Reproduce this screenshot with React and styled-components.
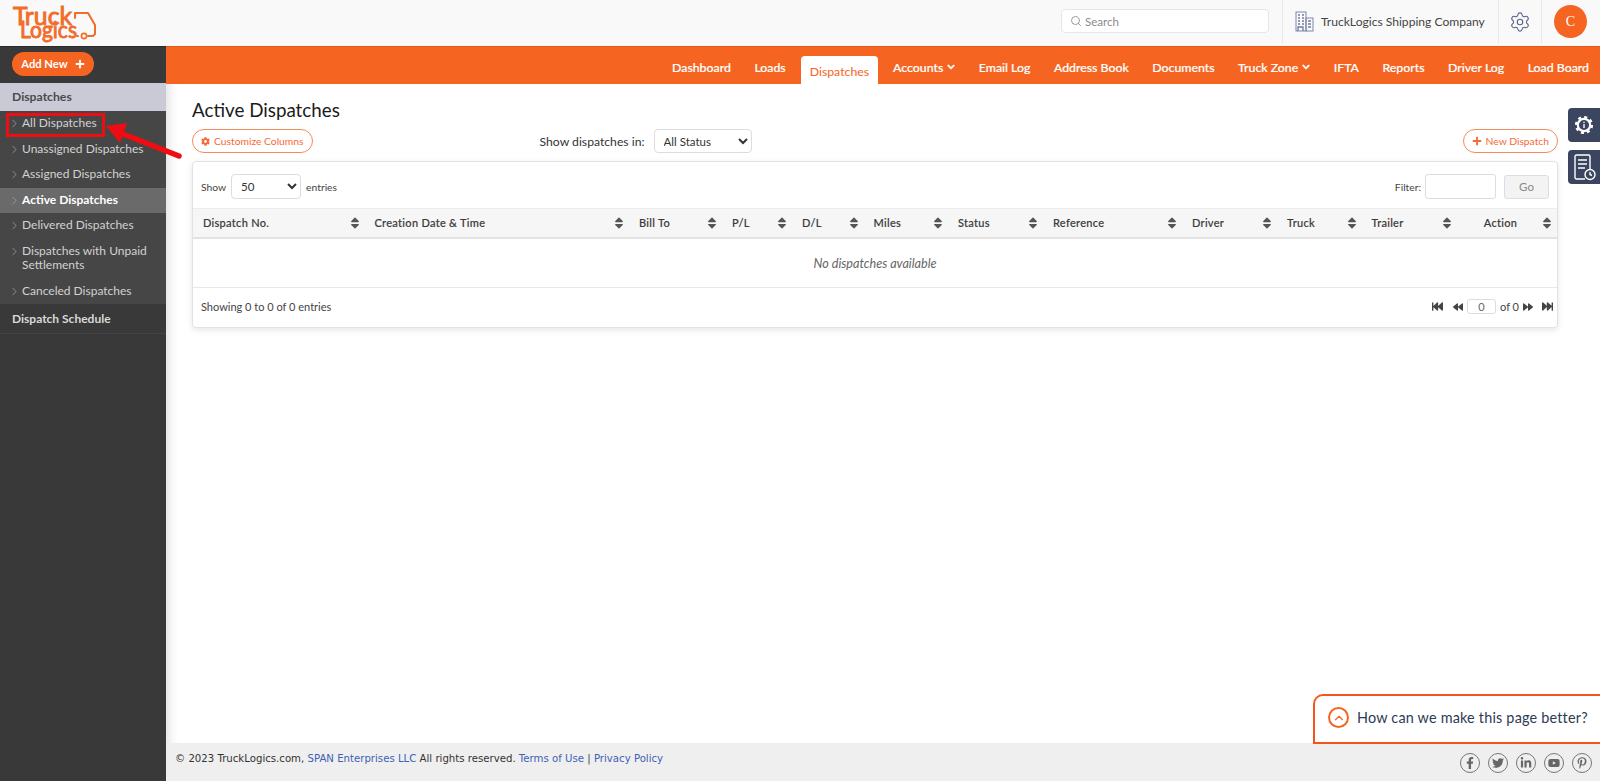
import React from 'react'
import styled, { createGlobalStyle } from 'styled-components'
import { Search, Settings, ChevronRight, ChevronUp } from 'lucide-react'
import {
  FaCog,
  FaSort,
  FaChevronDown,
  FaFastBackward,
  FaBackward,
  FaForward,
  FaFastForward,
  FaFacebookF,
  FaTwitter,
  FaLinkedinIn,
  FaYoutube,
  FaPinterestP,
  FaPlus,
} from 'react-icons/fa'

const ORANGE = '#f56420'

const GlobalStyle = createGlobalStyle`
  html, body { margin: 0; padding: 0; background: #fff; }
  body { font-family: "Lato", "Open Sans", sans-serif; color: #333; overflow: hidden; }
  * { box-sizing: border-box; }
`

const Page = styled.div`
  position: relative;
  height: 100vh;
  min-height: 781px;
  display: flex;
  flex-direction: column;
  overflow: hidden;
`

const TopBar = styled.header`
  height: 46px;
  flex: none;
  display: flex;
  align-items: flex-start;
  background: #f9f9f9;
  padding-right: 13px;
`

const LogoBox = styled.div`
  width: 100px;
  height: 46px;
  margin-right: auto;
`

const SearchBox = styled.div`
  width: 208px;
  height: 24px;
  margin: 9px 13px 0 0;
  display: flex;
  align-items: center;
  gap: 3px;
  padding-left: 8px;
  background: #fff;
  border: 1px solid #e6e6e6;
  border-radius: 4px;
  font-size: 11.5px;
  color: #8a8a8a;
`

const Company = styled.div`
  width: 216px;
  height: 43px;
  display: flex;
  align-items: center;
  gap: 7px;
  padding-left: 12px;
  border-left: 1px solid #e8e8e8;
  font-size: 12.1px;
  white-space: nowrap;
  color: #444;
`

const GearCell = styled.div`
  width: 44px;
  height: 43px;
  display: flex;
  align-items: center;
  justify-content: center;
  border-left: 1px solid #e8e8e8;
  border-right: 1px solid #e8e8e8;
  color: #56648a;
`

const Avatar = styled.div`
  width: 33px;
  height: 33px;
  margin: 5px 0 0 12px;
  border-radius: 50%;
  background: ${ORANGE};
  color: #fff;
  display: flex;
  align-items: center;
  justify-content: center;
  font-family: "Liberation Serif", serif;
  font-size: 14px;
`

const Body = styled.div`
  flex: 1;
  display: flex;
  min-height: 0;
`

const Sidebar = styled.aside`
  width: 166px;
  flex: none;
  background: #393939;
  border-top: 1px solid #2a2a2a;
  z-index: 2;
`

const AddRow = styled.div`
  height: 36px;
  padding: 5px 0 0 12px;
`

const AddButton = styled.button`
  width: 82px;
  height: 24px;
  border: 0;
  border-radius: 12px;
  background: ${ORANGE};
  color: #fff;
  font-family: inherit;
  font-size: 11.2px;
  font-weight: 700;
  display: flex;
  align-items: center;
  justify-content: center;
  gap: 7px;
  padding: 0 0 1px;
`

const SideHead = styled.div`
  height: 28px;
  display: flex;
  align-items: center;
  padding: 0 0 1px 12px;
  background: #c9cad6;
  color: #4a4a4a;
  font-size: 12.2px;
  font-weight: 700;
`

const SubList = styled.ul`
  list-style: none;
  margin: 0;
  padding: 0;
  background: #464646;
`

const SubItem = styled.li`
  min-height: 25.5px;
  display: flex;
  align-items: flex-start;
  gap: 1px;
  padding: 5px 6px 6px 8px;
  background: ${p => (p.$active ? '#6a6a6a' : 'transparent')};
  color: ${p => (p.$active ? '#fff' : '#d2d2d2')};
  font-size: 12px;
  font-weight: ${p => (p.$active ? 700 : 400)};
  line-height: 14.5px;

  svg {
    flex: none;
    margin-top: 1px;
    color: #b4b4b4;
  }
`

const SideLink = styled.div`
  height: 30px;
  display: flex;
  align-items: center;
  padding-left: 12px;
  border-bottom: 1px solid #444;
  color: #d8d8d8;
  font-size: 12px;
  font-weight: 700;
`

const Content = styled.div`
  flex: 1;
  min-width: 0;
  display: flex;
  flex-direction: column;
  box-shadow: inset 14px 0 12px -12px rgba(0, 0, 0, 0.14);
`

const Nav = styled.nav`
  height: 38px;
  flex: none;
  display: flex;
  justify-content: flex-end;
  align-items: flex-end;
  gap: 23.5px;
  padding-right: 11px;
  background: ${ORANGE};
  box-shadow: inset 0 1px 0 #e4571a;
`

const NavItem = styled.a`
  height: 28px;
  display: flex;
  align-items: center;
  gap: 4px;
  padding: ${p => (p.$active ? '2px 8.5px 0' : '0 0 6px')};
  margin: ${p => (p.$active ? '0 -8px' : '0')};
  background: ${p => (p.$active ? '#fff' : 'transparent')};
  color: ${p => (p.$active ? ORANGE : '#fff')};
  border-radius: 4px 4px 0 0;
  font-size: 12.3px;
  font-weight: ${p => (p.$active ? 400 : 500)};
  -webkit-text-stroke: ${p => (p.$active ? '0' : '0.2px #fff')};

  svg {
    stroke: currentColor;
    stroke-width: 50px;
  }
`

const Main = styled.main`
  flex: 1;
  padding: 14px 42px 0 26px;
  min-height: 0;
`

const Title = styled.h1`
  margin: 0;
  height: 23px;
  font-size: 18.8px;
  line-height: 23px;
  font-weight: 400;
  color: #1b1b1b;
`

const ToolRow = styled.div`
  height: 24px;
  margin-top: 8px;
  display: flex;
  align-items: center;
`

const Pill = styled.button`
  height: 24px;
  padding: 0 8px;
  margin-left: ${p => (p.$end ? 'auto' : '0')};
  display: flex;
  align-items: center;
  gap: 4px;
  border: 1px solid #f58a5a;
  border-radius: 12px;
  background: #fff;
  color: #f56a3c;
  font-family: inherit;
  font-size: 10.3px;
`

const StatusFilter = styled.div`
  display: flex;
  align-items: center;
  gap: 9px;
  margin-left: 227px;
  font-size: 12.2px;
`

const Select = styled.select`
  height: ${p => p.$h || 24}px;
  width: ${p => p.$w}px;
  padding: 0 0 0 5px;
  border: 1px solid #ddd;
  border-radius: 4px;
  background: #fff;
  color: #333;
  font-family: inherit;
  font-size: 11.5px;
`

const Card = styled.section`
  margin-top: 8px;
  border: 1px solid #e2e2e2;
  border-radius: 4px;
  background: #fff;
  box-shadow: 0 2px 6px rgba(0, 0, 0, 0.1);
`

const CardTop = styled.div`
  height: 46px;
  display: flex;
  align-items: center;
  justify-content: space-between;
  padding: 4px 8px 1px;
  font-size: 10.3px;
  color: #444;
`

const Group = styled.div`
  display: flex;
  align-items: center;
  gap: ${p => p.$gap || 4}px;
`

const FilterInput = styled.input`
  width: 71px;
  height: 25px;
  border: 1px solid #ddd;
  border-radius: 3px;
`

const GoButton = styled.button`
  width: 45px;
  height: 24px;
  margin-left: 4px;
  border: 1px solid #ddd;
  border-radius: 3px;
  background: #f3f3f3;
  color: #888;
  font-family: inherit;
  font-size: 11.5px;
`

const HeadRow = styled.div`
  height: 31px;
  display: grid;
  grid-template-columns: 171.5px 264.5px 93px 70px 71.5px 84.5px 95px 139px 95px 84.5px 95.5px 1fr;
  background: #f6f6f6;
  border-top: 1px solid #ececec;
  border-bottom: 2px solid #e2e2e2;
`

const HeadCell = styled.div`
  display: flex;
  align-items: center;
  justify-content: space-between;
  padding: 0 3px 1px 10px;
  font-size: 11px;
  font-weight: 500;
  letter-spacing: 0.3px;
  -webkit-text-stroke: 0.15px #3a3a3a;
  color: #3a3a3a;

  span {
    flex: 1;
    text-align: ${p => (p.$center ? 'center' : 'left')};
    padding-right: ${p => (p.$center ? '6px' : '0')};
  }

  svg {
    color: #555;
    flex: none;
  }
`

const EmptyRow = styled.div`
  height: 49px;
  display: flex;
  align-items: center;
  justify-content: center;
  border-bottom: 1px solid #e8e8e8;
  font-size: 12.6px;
  font-style: italic;
  color: #666;
`

const CardFoot = styled.div`
  height: 39px;
  display: flex;
  align-items: center;
  justify-content: space-between;
  padding: 0 4px 2px 8px;
  font-size: 11px;
  color: #444;
`

const Pager = styled.div`
  display: flex;
  align-items: center;
  gap: 4px;
  color: #444;
`

const PagerJump = styled.span`
  display: flex;
  margin: ${p => (p.$last ? '0 0 0 5px' : '0 6px 0 0')};
`

const PagerInput = styled.div`
  width: 29px;
  height: 15px;
  border: 1px solid #ddd;
  border-radius: 3px;
  text-align: center;
  font-size: 11px;
  line-height: 13px;
  color: #666;
`

const Footer = styled.footer`
  height: 38px;
  flex: none;
  display: flex;
  align-items: center;
  justify-content: space-between;
  padding: 0 8px 0 9px;
  background: #efefef;
  font-family: "DejaVu Sans", sans-serif;
  font-size: 10.17px;
  color: #333;

  a {
    color: #3d62b5;
  }
`

const Copy = styled.div`
  margin-bottom: 8px;
`

const Socials = styled.div`
  display: flex;
  gap: 8px;
  margin-top: 2px;
`

const Social = styled.div`
  width: 20px;
  height: 20px;
  border: 1px solid #777;
  border-radius: 50%;
  display: flex;
  align-items: center;
  justify-content: center;
  color: #666;
`

const SideTiles = styled.div`
  position: absolute;
  right: 0;
  top: 108px;
  display: flex;
  flex-direction: column;
  gap: 8px;
`

const Tile = styled.div`
  width: 32px;
  height: 34px;
  background: #3b4560;
  border-radius: 4px 0 0 4px;
  display: flex;
  align-items: center;
  justify-content: center;
`

const Feedback = styled.div`
  position: absolute;
  right: 0;
  top: 694px;
  width: 287px;
  height: 50px;
  display: flex;
  align-items: center;
  gap: 8px;
  padding: 0 0 3px 13px;
  background: #fff;
  border: 2px solid #f5541c;
  border-right: 0;
  border-top-left-radius: 10px;
  font-size: 14.4px;
  letter-spacing: 0.2px;
  white-space: nowrap;
  color: #2d3b55;
`

const FeedbackIcon = styled.div`
  width: 21px;
  height: 21px;
  flex: none;
  border: 2px solid ${ORANGE};
  border-radius: 50%;
  display: flex;
  align-items: center;
  justify-content: center;
  color: ${ORANGE};
`

const Highlight = styled.div`
  position: absolute;
  left: 6px;
  top: 113px;
  width: 99px;
  height: 24px;
  border: 3px solid #ee0d12;
  z-index: 3;
`

const Arrow = styled.svg`
  position: absolute;
  left: 100px;
  top: 115px;
  z-index: 3;
`

const Logo = () => (
  <svg width="100" height="46" viewBox="0 0 100 46">
    <g fill="#f26c2a" fontFamily="Lato, sans-serif" fontWeight="400">
      <text x="13" y="25" fontSize="25" textLength="59" lengthAdjust="spacingAndGlyphs" stroke="#f26c2a" strokeWidth="0.9">Truck</text>
      <text x="20" y="38" fontSize="23" textLength="57" lengthAdjust="spacingAndGlyphs" stroke="#f26c2a" strokeWidth="0.9">Logics</text>
    </g>
    <path
      d="M75 18v-5h13l7 12v9l-2 2h-5M78 36h-1"
      fill="none"
      stroke="#f26c2a"
      strokeWidth="2"
      strokeLinejoin="round"
      strokeLinecap="round"
    />
    <circle cx="84" cy="36" r="2.6" fill="none" stroke="#f26c2a" strokeWidth="1.6" />
  </svg>
)

const BuildingIcon = () => (
  <svg width="19" height="21" viewBox="0 0 19 21" fill="none" stroke="#6f7ba0" strokeWidth="0.9">
    <rect x="1" y="1" width="10" height="19" />
    <rect x="11" y="7" width="7" height="13" />
    <path
      d="M3 4h2M7 4h2M3 7h2M7 7h2M3 10h2M7 10h2M3 13h2M7 13h2M13 10h3M13 13h3M13 16h3M3 20v-4h5v4"
      strokeWidth="1.3"
    />
  </svg>
)

const InfoGear = () => (
  <svg width="20" height="20" viewBox="0 0 22 22" fill="none">
    <circle cx="11" cy="11" r="8.8" stroke="#fff" strokeWidth="2.4" strokeDasharray="3.4 3.5" />
    <circle cx="11" cy="11" r="6.8" stroke="#fff" strokeWidth="2.4" />
    <path d="M11 7.4v1.3M11 9.8v4.4" stroke="#fff" strokeWidth="1.5" />
  </svg>
)

const LogIcon = () => (
  <svg width="24" height="27" viewBox="0 0 24 27" fill="none" stroke="#fff" strokeWidth="1.4">
    <path d="M13 25H4.5A1.5 1.5 0 0 1 3 23.5v-21A1.5 1.5 0 0 1 4.5 1h12A1.5 1.5 0 0 1 18 2.5V15" />
    <path d="M6 6h9M6 10h9M6 14h7" />
    <circle cx="18" cy="20.5" r="5" fill="#3b4560" />
    <path d="M18 18v2.5l2 1" />
  </svg>
)

const ArrowShape = () => (
  <Arrow width="90" height="55" viewBox="0 0 90 55">
    <path d="M6 11 L27 8 L20 28 Z" fill="#ee0d12" />
    <path d="M18 17 L79 41" stroke="#ee0d12" strokeWidth="5.5" strokeLinecap="round" />
  </Arrow>
)

const navItems = [
  { label: 'Dashboard' },
  { label: 'Loads' },
  { label: 'Dispatches', active: true },
  { label: 'Accounts', caret: true },
  { label: 'Email Log' },
  { label: 'Address Book' },
  { label: 'Documents' },
  { label: 'Truck Zone', caret: true },
  { label: 'IFTA' },
  { label: 'Reports' },
  { label: 'Driver Log' },
  { label: 'Load Board' },
]

const subItems = [
  { label: 'All Dispatches' },
  { label: 'Unassigned Dispatches' },
  { label: 'Assigned Dispatches' },
  { label: 'Active Dispatches', active: true },
  { label: 'Delivered Dispatches' },
  { label: 'Dispatches with Unpaid Settlements' },
  { label: 'Canceled Dispatches' },
]

const columns = [
  'Dispatch No.',
  'Creation Date & Time',
  'Bill To',
  'P/L',
  'D/L',
  'Miles',
  'Status',
  'Reference',
  'Driver',
  'Truck',
  'Trailer',
  'Action',
]

const socials = [FaFacebookF, FaTwitter, FaLinkedinIn, FaYoutube, FaPinterestP]

const App = () => {
  return (
    <>
      <GlobalStyle />
      <Page>
        <TopBar>
          <LogoBox>
            <Logo />
          </LogoBox>
          <SearchBox>
            <Search size={12} color="#999" />
            Search
          </SearchBox>
          <Company>
            <BuildingIcon />
            TruckLogics Shipping Company
          </Company>
          <GearCell>
            <Settings size={22} strokeWidth={1.2} />
          </GearCell>
          <Avatar>C</Avatar>
        </TopBar>

        <Body>
          <Sidebar>
            <AddRow>
              <AddButton>
                Add New <FaPlus size={10} />
              </AddButton>
            </AddRow>
            <SideHead>Dispatches</SideHead>
            <SubList>
              {subItems.map(item => (
                <SubItem key={item.label} $active={item.active}>
                  <ChevronRight size={13} strokeWidth={1.2} />
                  <span>{item.label}</span>
                </SubItem>
              ))}
            </SubList>
            <SideLink>Dispatch Schedule</SideLink>
          </Sidebar>

          <Content>
            <Nav>
              {navItems.map(item => (
                <NavItem key={item.label} $active={item.active}>
                  {item.label}
                  {item.caret && <FaChevronDown size={8} />}
                </NavItem>
              ))}
            </Nav>

            <Main>
              <Title>Active Dispatches</Title>
              <ToolRow>
                <Pill>
                  <FaCog size={9} />
                  Customize Columns
                </Pill>
                <StatusFilter>
                  Show dispatches in:
                  <Select $w={98} defaultValue="All Status">
                    <option>All Status</option>
                  </Select>
                </StatusFilter>
                <Pill $end>
                  <FaPlus size={10} />
                  New Dispatch
                </Pill>
              </ToolRow>

              <Card>
                <CardTop>
                  <Group $gap={5}>
                    Show
                    <Select $w={70} $h={25} defaultValue="50">
                      <option>50</option>
                    </Select>
                    entries
                  </Group>
                  <Group>
                    Filter:
                    <FilterInput />
                    <GoButton>Go</GoButton>
                  </Group>
                </CardTop>

                <HeadRow>
                  {columns.map(col => (
                    <HeadCell key={col} $center={col === 'Action'}>
                      <span>{col}</span>
                      <FaSort size={14} />
                    </HeadCell>
                  ))}
                </HeadRow>

                <EmptyRow>No dispatches available</EmptyRow>

                <CardFoot>
                  Showing 0 to 0 of 0 entries
                  <Pager>
                    <PagerJump>
                      <FaFastBackward size={11} />
                    </PagerJump>
                    <FaBackward size={10} />
                    <PagerInput>0</PagerInput>
                    <span>of 0</span>
                    <FaForward size={10} />
                    <PagerJump $last>
                      <FaFastForward size={11} />
                    </PagerJump>
                  </Pager>
                </CardFoot>
              </Card>
            </Main>

            <Footer>
              <Copy>
                © 2023 TruckLogics.com, <a>SPAN Enterprises LLC</a> All rights reserved.{' '}
                <a>Terms of Use</a> | <a>Privacy Policy</a>
              </Copy>
              <Socials>
                {socials.map((Icon, i) => (
                  <Social key={i}>
                    <Icon size={12} />
                  </Social>
                ))}
              </Socials>
            </Footer>
          </Content>
        </Body>

        <SideTiles>
          <Tile>
            <InfoGear />
          </Tile>
          <Tile>
            <LogIcon />
          </Tile>
        </SideTiles>

        <Feedback>
          <FeedbackIcon>
            <ChevronUp size={14} strokeWidth={2} />
          </FeedbackIcon>
          How can we make this page better?
        </Feedback>

        <Highlight />
        <ArrowShape />
      </Page>
    </>
  )
}

export default App
